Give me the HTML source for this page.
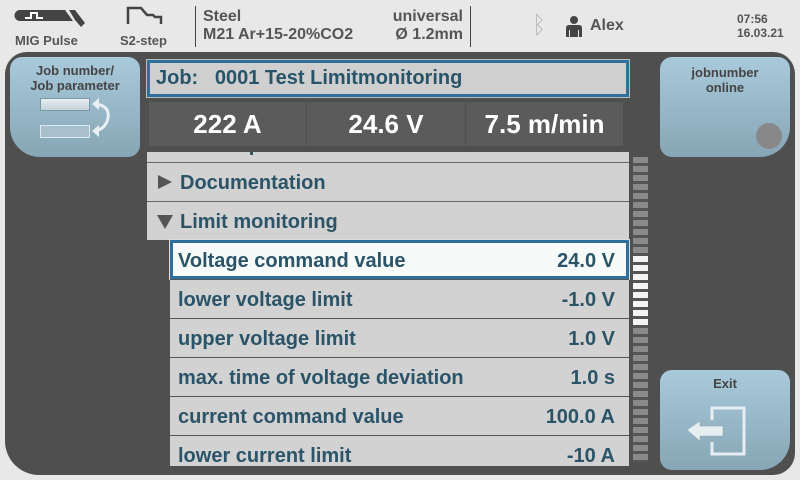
<!DOCTYPE html>
<html><head><meta charset="utf-8"><style>
*{margin:0;padding:0;box-sizing:border-box}
body{width:800px;height:480px;background:#e8e8e8;font-family:"Liberation Sans",sans-serif;font-weight:bold;position:relative;overflow:hidden}
.a{position:absolute}
.top{color:#555;font-size:16px}
.panel{left:5px;top:52px;width:790px;height:423px;background:#4f4f4f;border-radius:22px 22px 22px 34px}
.btn{background:linear-gradient(#a9cadc,#86a6b5);border-radius:12px;color:#444;font-size:13px;text-align:center;line-height:15px}
.row{left:170px;width:459px;height:39px;background:#d2d2d2;border-top:1px solid #555;color:#2b5468;font-size:20px;line-height:41px;padding:0 14px 0 8px}
.row span{float:right}
.val{top:102px;height:44px;background:#5b5b5b;color:#fff;font-size:26px;line-height:44px;text-align:center}
</style></head><body>
<svg class="a" style="left:13px;top:7px" width="74" height="22" viewBox="0 0 74 22"><path d="M7 3H52L60 14H7A5.5 5.5 0 0 1 7 3Z" fill="#444"/><path d="M12 11H18V6H24V11H30" stroke="#fff" stroke-width="2" fill="none"/><path d="M56 3H62L72 16L68 20L62 13Z" fill="#444"/></svg>
<div class="a top" style="left:15px;top:33px;font-size:13px">MIG Pulse</div>
<svg class="a" style="left:126px;top:6px" width="38" height="20"><path d="M2 18V2H15L21 9H27L29 11H35V18" stroke="#444" stroke-width="2.5" fill="none"/></svg>
<div class="a top" style="left:120px;top:33px;font-size:13px">S2-step</div>
<div class="a" style="left:195px;top:6px;width:1px;height:41px;background:#444"></div>
<div class="a top" style="left:203px;top:8px;line-height:18px">Steel<br>M21 Ar+15-20%CO2</div>
<div class="a top" style="left:370px;top:8px;width:93px;text-align:right;line-height:18px">universal<br>Ø 1.2mm</div>
<div class="a" style="left:470px;top:6px;width:1px;height:41px;background:#444"></div>
<div class="a" style="left:532px;top:12px;color:#bbb;font-size:24px;font-weight:normal">ᛒ</div>
<svg class="a" style="left:566px;top:16px" width="16" height="21"><circle cx="8" cy="4" r="4" fill="#444"/><path d="M0 21V12Q0 9 3 9H13Q16 9 16 12V21H13V14H12V21H4V14H3V21Z" fill="#444"/></svg>
<div class="a top" style="left:590px;top:17px;font-size:16px">Alex</div>
<div class="a top" style="left:737px;top:12px;font-size:12px;line-height:14px">07:56<br>16.03.21</div>

<div class="a panel"></div>
<div class="a btn" style="left:10px;top:57px;width:130px;height:100px;border-radius:12px 12px 12px 30px;padding-top:6px">Job number/<br>Job parameter</div>
<div class="a" style="left:40px;top:98px;width:50px;height:13px;background:linear-gradient(#e8eef0,#c2d2da);border:1px solid #7d98a6"></div>
<div class="a" style="left:40px;top:125px;width:50px;height:13px;background:#a8c0cc;border:1.5px solid #dce8ee"></div>
<svg class="a" style="left:90px;top:96px" width="26" height="44"><path d="M6 8Q20 10 18 22Q16 32 6 35" stroke="#e8f0f4" stroke-width="3" fill="none"/><path d="M2 8L9 2V14Z M2 35L9 29V41Z" fill="#e8f0f4"/></svg>

<div class="a" style="left:147px;top:60px;width:482px;height:37px;background:#cfcfcf;border:3px solid #2f6f9c;color:#285469;font-size:20px;line-height:31px;padding-left:6px;outline:1px solid #bbb">Job:&nbsp;&nbsp;&nbsp;0001 Test Limitmonitoring</div>
<div class="a val" style="left:149px;width:157px">222 A</div>
<div class="a val" style="left:307px;width:158px">24.6 V</div>
<div class="a val" style="left:466px;width:157px">7.5 m/min</div>

<div class="a" style="left:147px;top:152px;width:482px;height:88px;background:#d2d2d2"></div>
<div class="a" style="left:147px;top:162px;width:482px;height:1px;background:#666"></div>
<div class="a" style="left:147px;top:201px;width:482px;height:1px;background:#666"></div>
<div class="a" style="left:250px;top:152px;width:3px;height:3px;background:#2b5468"></div>
<svg class="a" style="left:157px;top:174px" width="16" height="16"><path d="M1 1L15 8L1 15Z" fill="#555"/></svg>
<div class="a" style="left:180px;top:172px;color:#2b5468;font-size:20px">Documentation</div>
<svg class="a" style="left:156px;top:214px" width="18" height="16"><path d="M1 1H17L9 15Z" fill="#555"/></svg>
<div class="a" style="left:180px;top:211px;color:#2b5468;font-size:20px">Limit monitoring</div>

<div class="a row" style="top:240px;background:#f6fbfa;border:3px solid #2f6f9c;outline:1px solid #ddd;line-height:36px;padding-left:5px;padding-right:11px">Voltage command value<span>24.0 V</span></div>
<div class="a row" style="top:279px">lower voltage limit<span>-1.0 V</span></div>
<div class="a row" style="top:318px">upper voltage limit<span>1.0 V</span></div>
<div class="a row" style="top:357px">max. time of voltage deviation<span>1.0 s</span></div>
<div class="a row" style="top:396px">current command value<span>100.0 A</span></div>
<div class="a row" style="top:435px;height:31px">lower current limit<span>-10 A</span></div>

<div class="a" style="left:633px;top:157px;width:15px;height:306px;background:repeating-linear-gradient(#8a8a8a 0 6px,#555 6px 9px)"></div>
<div class="a" style="left:633px;top:256px;width:15px;height:69px;background:repeating-linear-gradient(#f4f4f4 0 6px,#555 6px 9px)"></div>

<div class="a btn" style="left:660px;top:57px;width:130px;height:100px;border-radius:12px 12px 30px 12px;padding-top:8px">jobnumber<br>online</div>
<div class="a" style="left:756px;top:123px;width:26px;height:26px;border-radius:50%;background:#888"></div>

<div class="a btn" style="left:660px;top:370px;width:130px;height:100px;border-radius:12px 12px 30px 12px;padding-top:6px">Exit</div>
<svg class="a" style="left:686px;top:406px" width="62" height="52"><path d="M26 14V2H58V48H26V36" stroke="#e6eef2" stroke-width="3" fill="none"/><path d="M1 24L14 15V20H37V30H14V35Z" fill="#e6eef2" stroke="#8aa" stroke-width="0.5"/></svg>
</body></html>
